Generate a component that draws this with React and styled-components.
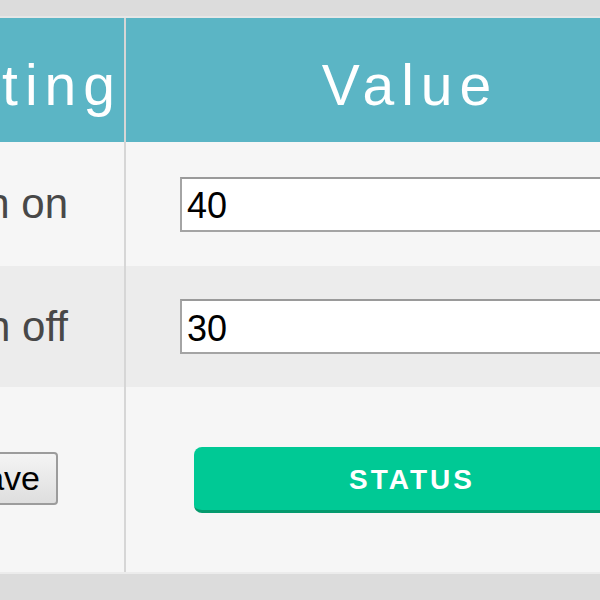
import React, { useState } from 'react';
import styled, { createGlobalStyle } from 'styled-components';

const GlobalStyle = createGlobalStyle`
  html, body {
    margin: 0;
    padding: 0;
    background: #dcdcdc;
    overflow: hidden;
  }
  body {
    font-family: "Liberation Sans", Arial, sans-serif;
  }
`;

const Page = styled.div`
  width: 600px;
  height: 600px;
  overflow: hidden;
  padding-top: 16px;
  box-sizing: border-box;
`;

const Table = styled.div`
  width: 818px;
  margin-left: -116px;
  border-top: 2px solid #e6e6e6;
  border-bottom: 2px solid #ececec;
  display: flex;
  flex-direction: column;
`;

const Row = styled.div`
  display: grid;
  grid-template-columns: 240px 578px;
  height: ${(p) => p.$height}px;
  background: ${(p) => p.$bg};
`;

const Cell = styled.div`
  display: flex;
  align-items: center;
  justify-content: ${(p) => p.$justify || 'center'};
  padding: ${(p) => p.$pad || '0'};
  box-sizing: border-box;
  border-left: ${(p) => (p.$divider ? '2px solid #d6d6d6' : 'none')};
  min-width: 0;
`;

const HeadText = styled.span`
  color: #ffffff;
  font-size: 57px;
  letter-spacing: 7px;
  padding-top: 10px;
`;

const Label = styled.span`
  color: #484848;
  font-size: 42px;
`;

const ValueInput = styled.input`
  width: 100%;
  height: 55px;
  box-sizing: border-box;
  border: 2px solid #a4a4a4;
  border-top-color: #9a9a9a;
  background: #ffffff;
  font-family: "Liberation Sans", Arial, sans-serif;
  font-size: 36px;
  color: #000000;
  padding: 4px 5px 0;
  outline: none;
`;

const SaveButton = styled.button`
  height: 53px;
  padding: 0 16px 0 15px;
  font-family: "Liberation Sans", Arial, sans-serif;
  font-size: 34px;
  color: #000000;
  background: linear-gradient(#f4f4f4, #dedede);
  border: 2px solid #9c9c9c;
  border-radius: 4px;
  margin-top: -3px;
`;

const StatusButton = styled.button`
  width: 100%;
  height: 66px;
  background: #00c995;
  border: none;
  border-bottom: 3px solid #049a6d;
  border-radius: 8px;
  color: #ffffff;
  font-family: "Liberation Sans", Arial, sans-serif;
  font-weight: bold;
  font-size: 28px;
  letter-spacing: 3px;
  padding: 3px 6px 0 0;
`;

const App = () => {
  const [onValue, setOnValue] = useState('40');
  const [offValue, setOffValue] = useState('30');

  return (
    <Page>
      <GlobalStyle />
      <Table>
        <Row $height={124} $bg="#5bb5c5">
          <Cell $justify="flex-end" $pad="0 2px 0 0">
            <HeadText>Setting</HeadText>
          </Cell>
          <Cell $divider $pad="0 8px 0 0">
            <HeadText>Value</HeadText>
          </Cell>
        </Row>
        <Row $height={124} $bg="#f6f6f6">
          <Cell $justify="flex-end" $pad="0 56px 0 0">
            <Label>Switch on</Label>
          </Cell>
          <Cell $divider $pad="0 54px">
            <ValueInput value={onValue} onChange={(e) => setOnValue(e.target.value)} />
          </Cell>
        </Row>
        <Row $height={121} $bg="#ececec">
          <Cell $justify="flex-end" $pad="0 56px 0 0">
            <Label>Switch off</Label>
          </Cell>
          <Cell $divider $pad="0 54px">
            <ValueInput value={offValue} onChange={(e) => setOffValue(e.target.value)} />
          </Cell>
        </Row>
        <Row $height={185} $bg="#f6f6f6">
          <Cell $justify="flex-end" $pad="0 66px 0 0">
            <SaveButton>Save</SaveButton>
          </Cell>
          <Cell $divider $pad="0 66px 0 68px">
            <StatusButton>STATUS</StatusButton>
          </Cell>
        </Row>
      </Table>
    </Page>
  );
};

export default App;
